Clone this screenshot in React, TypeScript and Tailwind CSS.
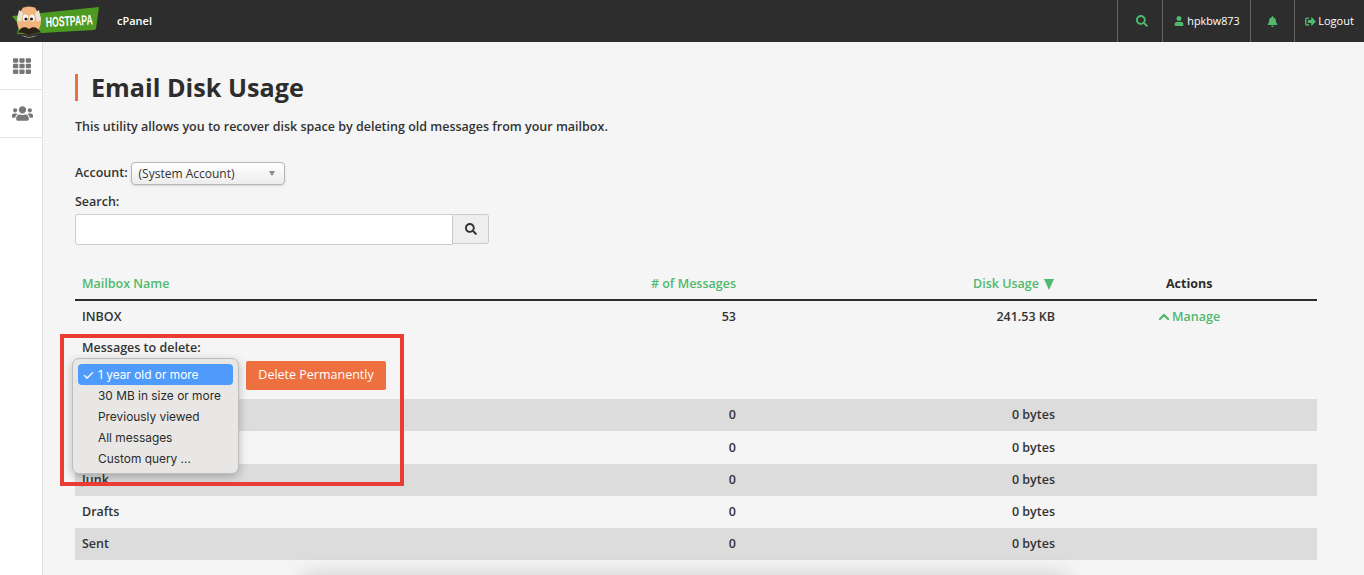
import { ChevronUp } from "lucide-react";
import { FaTh, FaUsers, FaSearch, FaBell, FaUser, FaSignOutAlt } from "react-icons/fa";

function Logo() {
  return (
    <svg width="100" height="38" viewBox="0 0 100 38" className="block">
      <polygon points="12,14 22,13 99,5 96,27 94,28 24,32 17,32 19,23" fill="#4c9a22" />
      <ellipse cx="29" cy="19" rx="12" ry="14" fill="#f2b57e" />
      <path d="M19 8 L23 11 L21 20 L17 18Z" fill="#e8e4da" />
      <path d="M39 8 L35 11 L37 20 L41 18Z" fill="#e8e4da" />
      <path d="M22 6 Q29 3 36 6 L34 9 L24 9Z" fill="#f2b57e" />
      <ellipse cx="25.5" cy="16" rx="2.6" ry="3.6" fill="#fff" />
      <ellipse cx="32" cy="16" rx="2.6" ry="3.6" fill="#fff" />
      <circle cx="26" cy="17" r="1.6" fill="#222" />
      <circle cx="31.5" cy="17" r="1.6" fill="#222" />
      <path d="M18 31 C20 25 25 24 29 27 C33 24 38 25 41 31 C37 29 33 33 29 33 C25 33 22 29 18 31Z" fill="#2a2118" />
      <path d="M21 33 Q29 38 38 33 L35 34 Q29 36 24 34Z" fill="#e8e4da" />
      <text x="46" y="25" fill="#fff" fontFamily="'Liberation Sans', sans-serif" fontWeight="700" fontSize="14" textLength="47" lengthAdjust="spacingAndGlyphs" transform="rotate(-3 46 25)">HOSTPAPA</text>
    </svg>
  );
}

function Row({ name, count, size, gray }: { name: string; count: string; size: string; gray?: boolean }) {
  return (
    <div className={`grid h-[32.3px] grid-cols-[240px_421px_319px_262px] items-center pt-[1px] text-[12.5px] font-semibold text-[#333] ${gray ? "bg-[#dcdcdc]" : ""}`}>
      <div className="pl-[7px]">{name}</div>
      <div className="text-right">{count}</div>
      <div className="text-right">{size}</div>
      <div />
    </div>
  );
}

export default function App() {
  return (
    <div className="relative h-[575px] w-full overflow-hidden bg-[#f5f5f5] font-['Open_Sans',sans-serif] text-[#333]">
      <header className="flex h-[42px] items-center justify-between bg-[#2d2d2d] text-white">
        <div className="flex items-center">
          <div className="w-[100px]"><Logo /></div>
          <span className="ml-[17px] text-[11px] font-semibold">cPanel</span>
        </div>
        <nav className="flex h-full text-[11px] font-medium">
          <div className="flex w-[45px] items-center justify-center border-l border-[#666] pl-[3px] text-[#4fb96d]">
            <FaSearch size={12} />
          </div>
          <div className="flex w-[88px] items-center justify-center gap-[3px] border-l border-[#666] pl-[1px]">
            <FaUser size={10} className="text-[#4fb96d]" />
            <span className="text-[10.8px]">hpkbw873</span>
          </div>
          <div className="flex w-[44px] items-center justify-center border-l border-[#666] text-[#4fb96d]">
            <FaBell size={11} />
          </div>
          <div className="flex w-[70px] items-center justify-center gap-[2px] border-l border-[#666]">
            <FaSignOutAlt size={11} className="text-[#4fb96d]" />
            <span>Logout</span>
          </div>
        </nav>
      </header>

      <div className="flex h-[533px]">
        <aside className="w-[43px] shrink-0 border-r border-[#dfe3e3] bg-white">
          <div className="flex h-[48px] items-center justify-center border-b border-[#dfe3e3] pl-[2px] text-[#777]">
            <FaTh size={18} />
          </div>
          <div className="flex h-[48px] items-center justify-center border-b border-[#dfe3e3] pl-[2px] text-[#777]">
            <FaUsers size={21} />
          </div>
        </aside>

        <main className="min-w-0 flex-1 pl-[32px] pt-[32px]">
          <h1 className="flex h-[27px] items-center border-l-[3px] border-[#ee7040] pl-[13px] text-[25.2px] font-bold leading-none text-[#2d2d2d]">
            Email Disk Usage
          </h1>
          <p className="mt-[16px] text-[12.5px] font-semibold leading-[20px]">
            This utility allows you to recover disk space by deleting old messages from your mailbox.
          </p>

          <div className="mt-[25px] flex h-[23px] items-center gap-[3px] text-[12.5px] font-semibold">
            <span>Account:</span>
            <div className="flex h-[23px] w-[154px] items-center justify-between rounded-[4px] border border-[#b5b5b5] bg-gradient-to-b from-white to-[#ececec] pl-[7px] pr-[9px] text-[12px] font-medium leading-none shadow-sm">
              <span>(System Account)</span>
              <span className="h-0 w-0 border-x-[3.5px] border-t-[5px] border-x-transparent border-t-[#888]" />
            </div>
          </div>

          <div className="mt-[8px] text-[12.5px] font-semibold leading-[18px]">Search:</div>
          <div className="mt-[3px] flex h-[31px] w-[414px]">
            <div className="h-full w-[379px] rounded-l-[3px] border border-[#ccc] bg-white" />
            <div className="flex h-[30px] w-[36px] items-center justify-center rounded-r-[3px] border border-l-0 border-[#ccc] bg-[#eee] text-[#333]">
              <FaSearch size={12} />
            </div>
          </div>

          <div className="mt-[23px] w-[1242px]">
            <div className="grid h-[33px] grid-cols-[240px_421px_319px_262px] items-center border-b-2 border-[#2d2d2d] pt-[2px] text-[12.5px] font-semibold text-[#4fb96d]">
              <div className="pl-[7px]">Mailbox Name</div>
              <div className="text-right"># of Messages</div>
              <div className="flex items-center justify-end gap-[5px] pr-[1px]">
                <span>Disk Usage</span>
                <span className="h-0 w-0 border-x-[5.5px] border-t-[11px] border-x-transparent border-t-[#4fb96d]" />
              </div>
              <div className="pl-[111px] font-bold text-[#2d2d2d]">Actions</div>
            </div>

            <div className="grid h-[32px] grid-cols-[240px_421px_319px_262px] items-center text-[12.5px] font-semibold">
              <div className="pl-[7px]">INBOX</div>
              <div className="text-right">53</div>
              <div className="text-right">241.53 KB</div>
              <div className="flex items-center pl-[101px] text-[#4fb96d]">
                <ChevronUp size={16} strokeWidth={3.5} />
                <span>Manage</span>
              </div>
            </div>

            <div className="h-[66px] pl-[7px] pt-[6px]">
              <div className="text-[12.5px] font-semibold leading-[18px]">Messages to delete:</div>
              <div className="ml-[164px] mt-[4px] flex h-[29px] w-[140px] items-center justify-center rounded-[2px] bg-[#ee7040] text-[12.5px] font-medium text-white">
                Delete Permanently
              </div>
            </div>

            <Row name="" count="0" size="0 bytes" gray />
            <Row name="" count="0" size="0 bytes" />
            <Row name="Junk" count="0" size="0 bytes" gray />
            <Row name="Drafts" count="0" size="0 bytes" />
            <Row name="Sent" count="0" size="0 bytes" gray />
          </div>
        </main>
      </div>

      {/* Native select popup over the table */}
      <div className="absolute left-[72px] top-[358px] h-[116px] w-[167px] rounded-[7px] border border-[#bdbdbd] bg-[#e8e7e5] pl-[5px] pr-[5px] pt-[5px] font-['Inter',sans-serif] text-[11.9px] leading-[21px] text-[#2b2b2b] shadow-[0_3px_10px_rgba(0,0,0,0.25)]">
        <div className="relative h-[21px] rounded-[4px] bg-[#4f9bfb] pl-[20px] text-white">
          <span className="absolute left-[4px] text-[14px]">✓</span>1 year old or more
        </div>
        <div className="pl-[20px]">30 MB in size or more</div>
        <div className="pl-[20px]">Previously viewed</div>
        <div className="pl-[20px]">All messages</div>
        <div className="pl-[20px]">Custom query ...</div>
      </div>

      {/* Red annotation rectangle */}
      <div className="pointer-events-none absolute left-[60px] top-[334px] h-[152px] w-[344px] border-[4px] border-[#ea3c35]" />

      {/* Bottom shadow of an overlapping element */}
      <div className="pointer-events-none absolute left-[300px] top-[574px] h-[20px] w-[770px] rounded-full bg-black/15 blur-[10px]" />
    </div>
  );
}
